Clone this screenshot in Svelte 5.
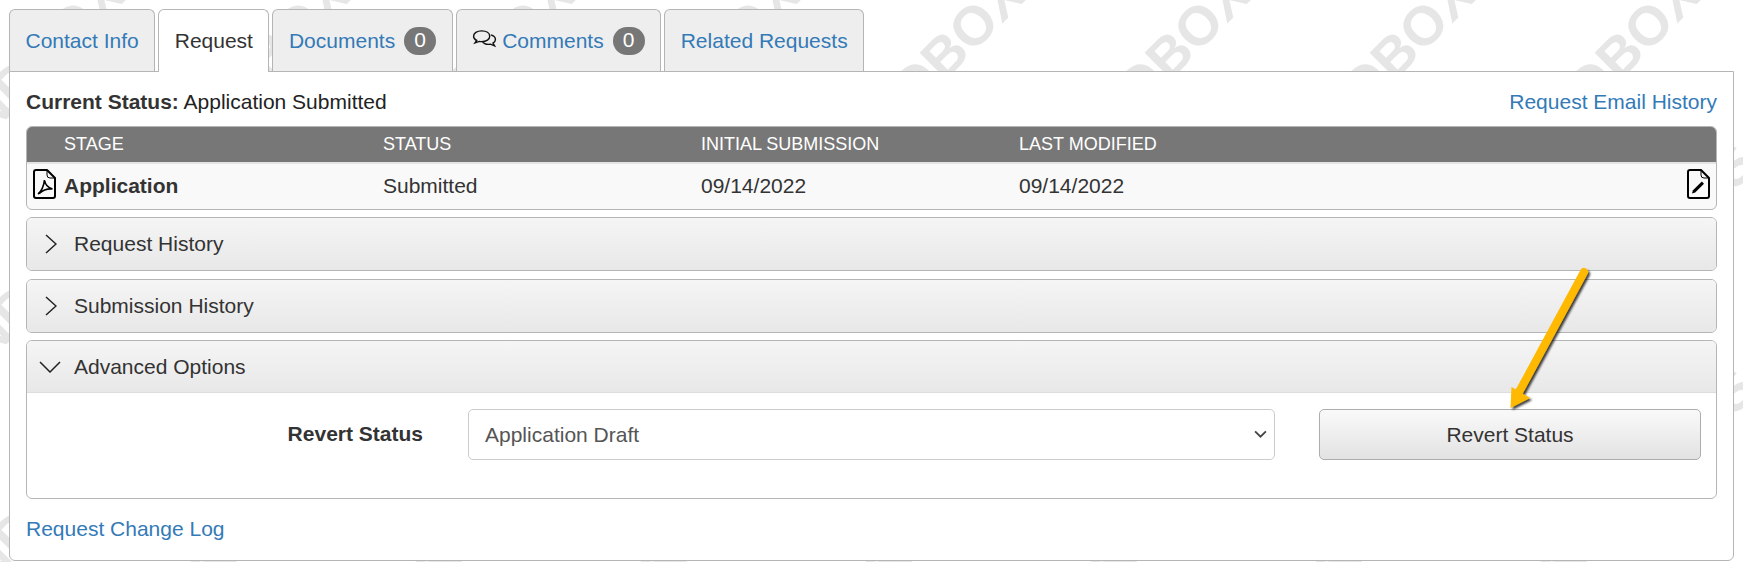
<script>
	const tabs = [
		{label: "Contact Info"},
		{label: "Request", active: true},
		{label: "Documents", count: 0},
		{label: "Comments", count: 0, chat: true},
		{label: "Related Requests"}
	];
	const columns = ["Stage", "Status", "Initial Submission", "Last Modified"];

	const marks = [];
	for (let row = -1; row < 3; row++) {
		for (let col = -1; col < 9; col++) {
			marks.push({x: col * 225 + 158.5, y: row * 225 + 192.3});
		}
	}
</script>

<svg class="watermark" width="1743" height="562" aria-hidden="true">
	{#each marks as m}
		<text x={m.x} y={m.y} transform="rotate(-45 {m.x} {m.y})">SANDBOX</text>
	{/each}
</svg>

<div class="page">
	<nav class="tabs">
		{#each tabs as tab}
			<a class="tab" class:active={tab.active} href="#top">
				{#if tab.chat}
					<svg class="chat" viewBox="0 0 26 20" width="25" height="19" fill="none" stroke="#111" stroke-width="1.5">
						<path d="M10 2C5 2 1.500 4.400 1.500 7.500c0 2 1.300 3.600 3.300 4.600L3 14.600l4.600-1.500c.8.200 1.600.200 2.400.200 5 0 8.500-2.500 8.500-5.800S15 2 10 2z" />
						<path d="M19.600 6.200c2.900.8 4.900 2.600 4.900 4.800 0 1.600-1 2.900-2.600 3.800l1.700 3-4.400-1.800c-3.400.5-7-.6-8.400-3" />
					</svg>
				{/if}
				<span>{tab.label}</span>
				{#if tab.count !== undefined}
					<span class="badge">{tab.count}</span>
				{/if}
			</a>
		{/each}
	</nav>

	<section class="panel">
		<div class="status-line">
			<div><strong>Current Status:</strong> Application Submitted</div>
			<a href="#top">Request Email History</a>
		</div>

		<div class="stages">
			<div class="row head">
				<span></span>
				{#each columns as c}
					<span>{c}</span>
				{/each}
			</div>
			<div class="row body">
				<svg class="file pdf" viewBox="0 0 23 30" width="23" height="30" fill="none" stroke="#000" stroke-width="2">
					<path d="M3 1h11l8 8v18a2 2 0 0 1-2 2H3a2 2 0 0 1-2-2V3a2 2 0 0 1 2-2z" stroke-linejoin="round" />
					<path d="M14 1v5a3 3 0 0 0 3 3h5" stroke-width="1" />
					<path d="M5 25c3-2 6-8 6.500-14M11.500 11c.5 4 3 7.500 8 9M6 24.500c3.500-3 8-5 13.500-4.500" stroke-width="1.700" />
				</svg>
				<strong>Application</strong>
				<span>Submitted</span>
				<span>09/14/2022</span>
				<span>09/14/2022</span>
				<svg class="file edit" viewBox="0 0 23 30" width="23" height="30" fill="none" stroke="#000" stroke-width="2">
					<path d="M3 1h11l8 8v18a2 2 0 0 1-2 2H3a2 2 0 0 1-2-2V3a2 2 0 0 1 2-2z" stroke-linejoin="round" />
					<path d="M14 1v5a3 3 0 0 0 3 3h5" stroke-width="1" />
					<path d="M5 24.500l1-3.200 8.800-8.800 2.200 2.200-8.800 8.800z" fill="#000" stroke="none" />
				</svg>
			</div>
		</div>

		<div class="accordion first">
			<div class="acc-head">
				<svg class="chev" viewBox="0 0 12 20" width="12" height="20" fill="none" stroke="#222" stroke-width="1.500"><path d="M1 1l10 9-10 9" /></svg>
				<span>Request History</span>
			</div>
		</div>
		<div class="accordion">
			<div class="acc-head">
				<svg class="chev" viewBox="0 0 12 20" width="12" height="20" fill="none" stroke="#222" stroke-width="1.500"><path d="M1 1l10 9-10 9" /></svg>
				<span>Submission History</span>
			</div>
		</div>
		<div class="accordion last">
			<div class="acc-head open">
				<svg class="chev" viewBox="0 0 22 12" width="22" height="12" fill="none" stroke="#222" stroke-width="1.500"><path d="M1 1l10 10L21 1" /></svg>
				<span>Advanced Options</span>
			</div>
			<div class="acc-body">
				<label for="revert">Revert Status</label>
				<div class="select" id="revert">
					<span>Application Draft</span>
					<svg viewBox="0 0 14 10" width="13" height="9" fill="none" stroke="#444" stroke-width="2"><path d="M1 1.500l6 6 6-6" /></svg>
				</div>
				<button type="button">Revert Status</button>
			</div>
		</div>

		<a class="log" href="#top">Request Change Log</a>

		<svg class="arrow" width="100" height="156" viewBox="0 0 100 156" aria-hidden="true">
			<defs>
				<filter id="shadow" x="-30%" y="-30%" width="160%" height="160%">
					<feDropShadow dx="2" dy="2" stdDeviation="1.200" flood-color="#000" flood-opacity="0.75" />
				</filter>
			</defs>
			<g filter="url(#shadow)">
				<path d="M84 10L19 130" stroke="#ffb900" stroke-width="8" stroke-linecap="round" fill="none" />
				<path d="M10.500 146L11.500 125 30 136z" fill="#ffb900" />
			</g>
		</svg>
	</section>
</div>

<style>
	:global(body) {
		margin: 0;
		background: #fff;
		font-family: "Liberation Sans", Arial, sans-serif;
		font-size: 21px;
		color: #333;
	}

	.watermark {
		position: absolute;
		left: 0;
		top: 0;
		z-index: 0;
	}

	.watermark text {
		font: bold 55px "Liberation Sans", Arial, sans-serif;
		fill: #e6e6e6;
	}

	.page {
		position: relative;
		z-index: 1;
		padding: 9px 9px 0 9px;
		height: 562px;
		box-sizing: border-box;
		overflow: hidden;
	}

	a {
		color: #337ab7;
		text-decoration: none;
	}

	.tabs {
		display: flex;
		gap: 3px;
		height: 62px;
		position: relative;
		z-index: 2;
	}

	.tab {
		display: flex;
		align-items: center;
		gap: 5px;
		box-sizing: border-box;
		height: 62px;
		padding: 0 15.5px;
		background: #eee;
		border: 1px solid #b5b5b5;
		border-bottom: none;
		border-radius: 6px 6px 0 0;
	}

	.tab.active {
		background: #fff;
		height: 63px;
		color: #333;
	}

	.badge {
		width: 32px;
		height: 28px;
		line-height: 26px;
		text-align: center;
		margin-left: 4px;
		border-radius: 14px;
		background: #777;
		color: #fff;
	}

	.chat {
		margin-top: -5px;
	}

	.panel {
		position: relative;
		box-sizing: border-box;
		height: 490px;
		padding: 0 16px;
		background: #fff;
		border: 1px solid #b5b5b5;
		border-radius: 0 0 6px 6px;
	}

	.status-line {
		display: flex;
		justify-content: space-between;
		align-items: center;
		box-sizing: border-box;
		height: 54px;
		padding-top: 5px;
		color: #222;
	}

	.status-line strong {
		color: #333;
	}

	.stages {
		border: 1px solid #b5b5b5;
		border-radius: 6px;
		overflow: hidden;
		background: #f9f9f9;
		height: 84px;
		box-sizing: border-box;
	}

	.row {
		display: grid;
		grid-template-columns: 37px 319px 318px 318px 1fr auto;
		align-items: center;
	}

	.row.head {
		box-sizing: border-box;
		height: 37px;
		background: #777;
		color: #fff;
		font-size: 18px;
		text-transform: uppercase;
		border-bottom: 2px solid #e4e4e4;
	}

	.row.body {
		box-sizing: border-box;
		height: 45px;
		padding-bottom: 2px;
	}

	.row strong {
		color: #333;
	}

	.file {
		align-self: start;
		margin-top: 5px;
	}

	.file.pdf {
		margin-left: 6px;
	}

	.file.edit {
		margin-right: 6px;
	}

	.accordion {
		margin-top: 8px;
		border: 1px solid #b5b5b5;
		border-radius: 6px;
		overflow: hidden;
		box-sizing: border-box;
	}

	.accordion.first,
	.accordion.last {
		margin-top: 7px;
	}

	.acc-head {
		display: flex;
		align-items: center;
		box-sizing: border-box;
		height: 52px;
		padding-left: 18px;
		gap: 17px;
		background: linear-gradient(#f5f5f5, #e8e8e8);
	}

	.acc-head.open {
		padding-left: 12px;
		gap: 13px;
		border-bottom: 1px solid #ddd;
	}

	.acc-body {
		display: flex;
		align-items: flex-start;
		height: 105px;
		padding-top: 16px;
		box-sizing: border-box;
	}

	label {
		width: 441px;
		padding-right: 45px;
		box-sizing: border-box;
		text-align: right;
		font-weight: bold;
		line-height: 50px;
	}

	.select {
		display: flex;
		justify-content: space-between;
		align-items: center;
		width: 807px;
		height: 51px;
		box-sizing: border-box;
		padding: 0 7px 0 16px;
		border: 1px solid #ccc;
		border-radius: 5px;
		color: #555;
	}

	button {
		width: 382px;
		height: 51px;
		margin-left: 44px;
		border: 1px solid #adadad;
		border-radius: 5px;
		background: linear-gradient(#fafafa, #e2e2e2);
		font: inherit;
		color: #333;
	}

	.log {
		display: block;
		margin-top: 18px;
		line-height: 24px;
	}

	.arrow {
		position: absolute;
		left: 1490px;
		top: 190px;
	}
</style>
